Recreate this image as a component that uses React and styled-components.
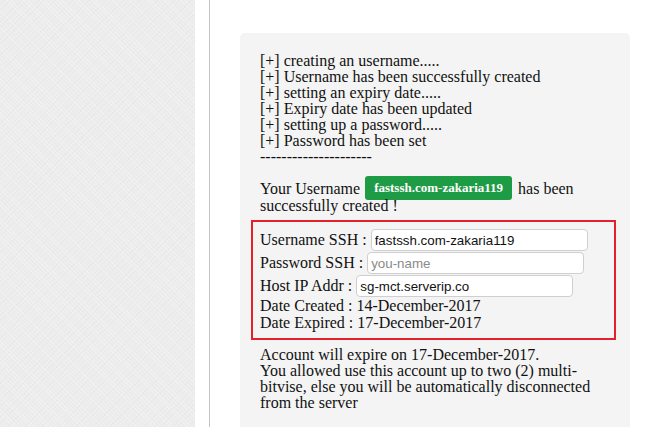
import React from "react";
import styled, { createGlobalStyle } from "styled-components";

const Global = createGlobalStyle`
  html, body { margin: 0; padding: 0; height: 100%; overflow: hidden; }
  body { background: #fff; }
  #root { height: 100%; }
`;

const Page = styled.div`
  display: flex;
  height: 427px;
  width: 670px;
  font-family: "Liberation Serif", "Times New Roman", serif;
  color: #111;
`;

const Sidebar = styled.div`
  width: 195px;
  flex: none;
  background-color: #ececec;
  background-image:
    repeating-linear-gradient(45deg, rgba(255,255,255,0.25) 0 1px, transparent 1px 3px),
    repeating-linear-gradient(-45deg, rgba(0,0,0,0.015) 0 1px, transparent 1px 4px);
`;

const Main = styled.div`
  flex: 1;
  padding-left: 14px;
  display: flex;
`;

const Content = styled.div`
  flex: 1;
  border-left: 1px solid #c4c4c4;
  padding: 33px 0 0 30px;
`;

const Card = styled.div`
  width: 390px;
  height: 394px;
  box-sizing: border-box;
  background: #f4f4f4;
  border-radius: 5px 5px 0 0;
  padding: 20px 14px 0 11px;
  font-size: 16px;
  line-height: 16px;
`;

const TextBlock = styled.div`
  padding-left: 9px;
  margin-top: ${(p) => p.$mt || 0}px;
  line-height: ${(p) => p.$lh || 16}px;
`;

const Badge = styled.span`
  background: #1e9b45;
  color: #fff;
  font-weight: bold;
  font-size: 13px;
  line-height: 15px;
  padding: 4px 9px 5px 9px;
  border-radius: 3px;
  margin: 0 2px 0 1px;
  vertical-align: 2px;
`;

const RedBox = styled.div`
  margin-top: 6px;
  border: 2px solid #e3212b;
  padding: 7px 0 7px 7px;
  display: flex;
  flex-direction: column;
  gap: 1px;
`;

const Row = styled.div`
  display: flex;
  align-items: center;
  white-space: pre;
  height: ${(p) => (p.$input ? 22 : 16)}px;
`;

const Input = styled.input`
  width: 217px;
  height: 22px;
  box-sizing: border-box;
  border: 1px solid #cfcfcf;
  border-radius: 4px;
  background: #fff;
  padding: 0 3px;
  font-family: "Liberation Sans", Arial, sans-serif;
  font-size: 13.33px;
  color: #111;
  outline: none;
  &::placeholder { color: #8a8a8a; }
`;

export default function App() {
  const log = [
    "[+] creating an username.....",
    "[+] Username has been successfully created",
    "[+] setting an expiry date.....",
    "[+] Expiry date has been updated",
    "[+] setting up a password.....",
    "[+] Password has been set",
    "---------------------",
  ];
  return (
    <>
      <Global />
      <Page>
        <Sidebar />
        <Main>
          <Content>
            <Card>
              <TextBlock>
                {log.map((l, i) => (
                  <div key={i}>{l}</div>
                ))}
              </TextBlock>
              <TextBlock $mt={15} $lh={17}>
                Your Username <Badge>fastssh.com-zakaria119</Badge> has been successfully created !
              </TextBlock>
              <RedBox>
                <Row $input>
                  Username SSH : <Input readOnly value="fastssh.com-zakaria119" />
                </Row>
                <Row $input>
                  Password SSH : <Input placeholder="you-name" />
                </Row>
                <Row $input>
                  Host IP Addr : <Input readOnly value="sg-mct.serverip.co" />
                </Row>
                <Row>Date Created : 14-December-2017</Row>
                <Row>Date Expired : 17-December-2017</Row>
              </RedBox>
              <TextBlock $mt={7}>
                Account will expire on 17-December-2017.
                <br />
                You allowed use this account up to two (2) multi-bitvise, else you will be automatically disconnected from the server
              </TextBlock>
            </Card>
          </Content>
        </Main>
      </Page>
    </>
  );
}
